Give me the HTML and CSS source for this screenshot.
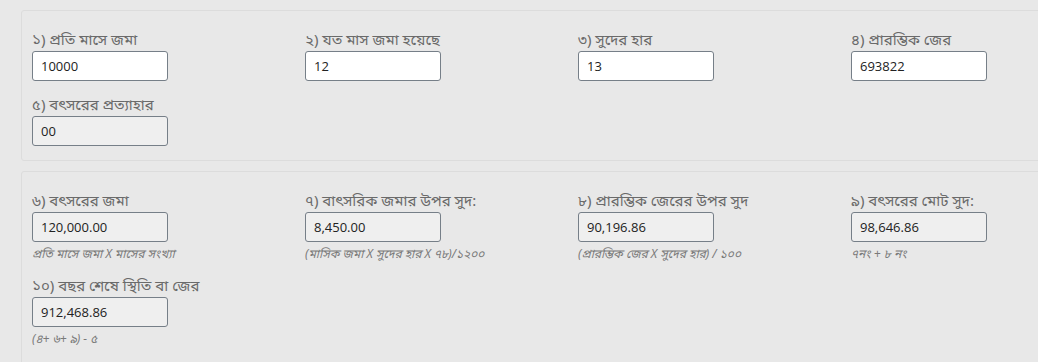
FILE: index.html
```html
<!DOCTYPE html>
<html lang="bn">
<head>
    <meta charset="UTF-8">
    <meta name="viewport" content="width=device-width, initial-scale=1.0">
    <title>সঞ্চয় হিসাব</title>
    <link rel="stylesheet" href="styles.css">
</head>
<body>
    <div class="page">
        <div class="panel">
            <div class="field">
                <label>১) প্রতি মাসে জমা</label>
                <input type="text" value="10000">
            </div>
            <div class="field">
                <label>২) যত মাস জমা হয়েছে</label>
                <input type="text" value="12">
            </div>
            <div class="field">
                <label>৩) সুদের হার</label>
                <input type="text" value="13">
            </div>
            <div class="field">
                <label>৪) প্রারম্ভিক জের</label>
                <input type="text" value="693822">
            </div>
            <div class="field">
                <label>৫) বৎসরের প্রত্যাহার</label>
                <input type="text" class="readonly" value="00" readonly>
            </div>
        </div>

        <div class="panel results">
            <div class="field">
                <label>৬) বৎসরের জমা</label>
                <input type="text" class="readonly" value="120,000.00" readonly>
                <small>প্রতি মাসে জমা X মাসের সংখ্যা</small>
            </div>
            <div class="field">
                <label>৭) বাৎসরিক জমার উপর সুদ:</label>
                <input type="text" class="readonly" value="8,450.00" readonly>
                <small>(মাসিক জমা X সুদের হার X ৭৮)/১২০০</small>
            </div>
            <div class="field">
                <label>৮) প্রারম্ভিক জেরের উপর সুদ</label>
                <input type="text" class="readonly" value="90,196.86" readonly>
                <small>(প্রারম্ভিক জের X সুদের হার) / ১০০</small>
            </div>
            <div class="field">
                <label>৯) বৎসরের মোট সুদ:</label>
                <input type="text" class="readonly" value="98,646.86" readonly>
                <small>৭নং + ৮ নং</small>
            </div>
            <div class="field">
                <label>১০) বছর শেষে স্থিতি বা জের</label>
                <input type="text" class="readonly" value="912,468.86" readonly>
                <small>(৪+ ৬+ ৯) - ৫</small>
            </div>
        </div>
    </div>
</body>
</html>
```

FILE: styles.css
```css
body {
    margin: 0;
    background: #e8e8e8;
    font-family: 'Noto Sans', 'Noto Sans Bengali', 'Open Sans', sans-serif;
    overflow: hidden;
}
.page {
    padding: 10px 0 0 21px;
    width: 1120px;
}
.panel {
    display: grid;
    grid-template-columns: repeat(4, 273px);
    row-gap: 13px;
    padding: 18px 10px 14px 10px;
    border: 1px solid #dcdcdc;
    border-radius: 3px;
    margin-bottom: 10px;
}
.panel.results {
    padding-bottom: 24px;
}
.field {
    display: flex;
    flex-direction: column;
    align-items: flex-start;
}
label {
    font-size: 15px;
    color: #6a6a6a;
    line-height: 20px;
    margin-bottom: 2px;
}
input {
    width: 136px;
    height: 30px;
    box-sizing: border-box;
    padding: 0 8px;
    border: 1px solid #767f88;
    border-radius: 3px;
    background: #fff;
    font-family: 'Open Sans', sans-serif;
    font-size: 13px;
    color: #222;
}
input.readonly {
    background: #efefef;
}
small {
    font-size: 12px;
    font-style: italic;
    color: #7a7a7a;
    margin-top: 3px;
    line-height: 17px;
}
```
